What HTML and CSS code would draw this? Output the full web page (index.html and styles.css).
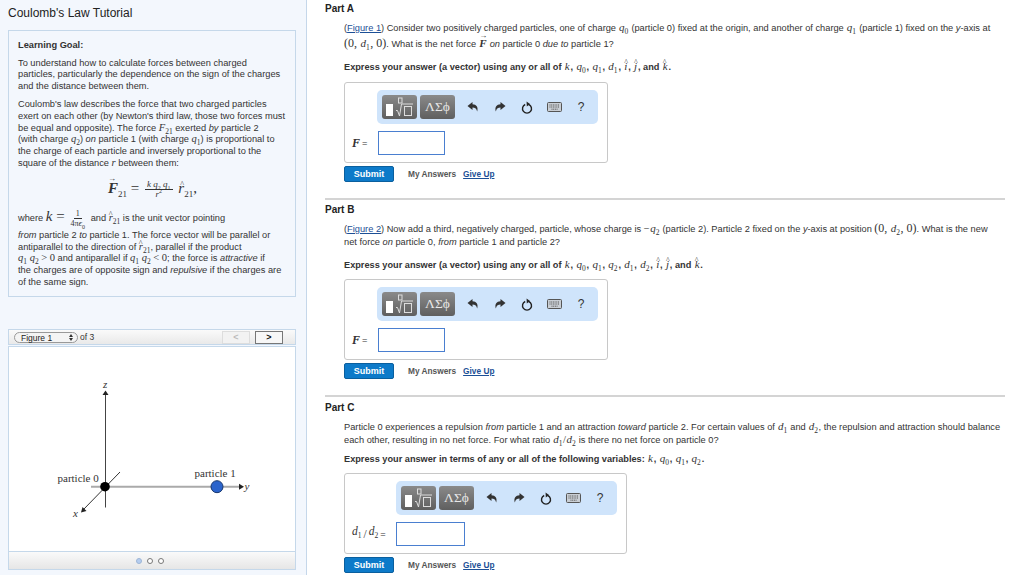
FILE: index.html
```html
<!DOCTYPE html>
<html lang="en">

<head>
    <meta charset="UTF-8">
    <title>Coulomb's Law Tutorial</title>
    <link rel="stylesheet" href="styles.css">
</head>

<body>
    <svg class="defs" width="0" height="0">
        <symbol id="ico-undo" viewBox="0 0 12 12">
            <path d="M5.500 1 .5 5l5 4V6.400c2.300 0 3.900.9 4.700 4 1.300-4.300-.9-7-4.700-7.200z" fill="#333" />
        </symbol>
        <symbol id="ico-redo" viewBox="0 0 12 12">
            <path d="M6.500 1l5 4-5 4V6.400c-2.300 0-3.900.9-4.700 4-1.300-4.300.9-7 4.700-7.200z" fill="#333" />
        </symbol>
        <symbol id="ico-reload" viewBox="0 0 12 12">
            <path d="M7.800 3a4.500 4.500 0 1 1-3.600 0" fill="none" stroke="#222" stroke-width="1.400" />
            <path d="M5.600 0 9 2.600 5.800 5z" fill="#222" />
        </symbol>
        <symbol id="ico-keys" viewBox="0 0 15 10">
            <rect x=".5" y=".5" width="14" height="9" rx="1" fill="#c9ced4" stroke="#555" />
            <path d="M2.500 3h10M2.500 5h10M4.500 7.200h6" stroke="#555" stroke-dasharray="1 .7" />
        </symbol>
        <symbol id="ico-root" viewBox="0 0 30 20">
            <rect x="1" y="7" width="7" height="12" fill="#fff" />
            <path d="M11 13.500h1.500l2 5.500 2-12h11.500" fill="none" stroke="#ddd" />
            <rect x="13.500" y="1" width="3.500" height="5" fill="none" stroke="#ddd" />
            <rect x="19.500" y="9.500" width="7" height="9" fill="none" stroke="#ddd" />
        </symbol>
    </svg>

    <div class="page">
        <div class="side">
            <div class="side-title">Coulomb's Law Tutorial</div>

            <div class="goal">
                <div class="goal-head">Learning Goal:</div>
                <p>To understand how to calculate forces between charged<br>particles, particularly the dependence on the sign of the charges<br>and the distance between them.</p>
                <p>Coulomb's law describes the force that two charged particles<br>exert on each other (by Newton's third law, those two forces must<br>be equal and opposite). The force <i class="v">F<sub>21</sub></i> exerted <em>by</em> particle 2<br>(with charge <i class="v">q<sub>2</sub></i>) <em>on</em> particle 1 (with charge <i class="v">q<sub>1</sub></i>) is proportional to<br>the charge of each particle and inversely proportional to the<br>square of the distance <i class="v">r</i> between them:</p>
                <div class="formula">
                    <i class="v vec">F</i><sub>21</sub> = <span class="frac"><span><i class="v">k q<sub>2</sub> q<sub>1</sub></i></span><span><i class="v">r</i><sup>2</sup></span></span> <i class="v hat">r</i><sub>21</sub>,
                </div>
                <div class="where">where <span class="big"><i class="v">k</i> = </span><span class="frac"><span>1</span><span>4π<i class="v">ϵ<sub>0</sub></i></span></span> and <i class="v hat">r</i><sub class="v-sub">21</sub> is the unit vector pointing</div>
                <p class="after"><em>from</em> particle 2 <em>to</em> particle 1. The force vector will be parallel or<br>antiparallel to the direction of <i class="v hat">r</i><sub class="v-sub">21</sub>, parallel if the product<br><i class="v">q<sub>1</sub> q<sub>2</sub></i> <span class="s">&gt; 0</span> and antiparallel if <i class="v">q<sub>1</sub> q<sub>2</sub></i> <span class="s">&lt; 0</span>; the force is <em>attractive</em> if<br>the charges are of opposite sign and <em>repulsive</em> if the charges are<br>of the same sign.</p>
            </div>

            <div class="fig-bar">
                <div class="fig-select">Figure 1<span class="updown"></span></div>
                <span class="fig-of">of 3</span>
                <div class="fig-btn fig-btn-off">&lt;</div>
                <div class="fig-btn">&gt;</div>
            </div>
            <div class="fig-panel">
                <svg class="diagram" viewBox="9 347 287 203" width="287" height="203">
                    <path d="M105.500 507.500V393" stroke="#444" />
                    <path d="M105.500 390.500l-3 4.500h6z" fill="#222" />
                    <path d="M120 472 83 510" stroke="#333" />
                    <path d="M81 512.500l1.500-5.500 4 4z" fill="#222" />
                    <path d="M91 486.700h148" stroke="#aaa" stroke-width="2" />
                    <path d="M244 486.700l-5-3v6z" fill="#222" />
                    <circle cx="105" cy="486.700" r="4.800" fill="#000" />
                    <circle cx="217" cy="486.700" r="6" fill="#2b64cc" stroke="#17376f" />
                    <text class="d-label" x="57.500" y="481.500">particle 0</text>
                    <text class="d-label" x="194.500" y="476.500">particle 1</text>
                    <text class="d-axis" x="103" y="388">z</text>
                    <text class="d-axis" x="73" y="517">x</text>
                    <text class="d-axis" x="244.500" y="490">y</text>
                </svg>
            </div>
            <div class="fig-dots">
                <span class="dot dot-on"></span><span class="dot"></span><span class="dot"></span>
            </div>
        </div>

        <div class="main">
            <section class="part part-a">
                <h2>Part A</h2>
                <p class="q">(<a href="#">Figure 1</a>) Consider two positively charged particles, one of charge <i class="v">q<sub>0</sub></i> (particle 0) fixed at the origin, and another of charge <i class="v">q<sub>1</sub></i> (particle 1) fixed on the <em>y</em>-axis at<br><span class="s big">(0, <i class="v">d<sub>1</sub></i>, 0)</span>. What is the net force <i class="v vec big">F</i> <em>on</em> particle 0 <em>due to</em> particle 1?</p>
                <p class="express">Express your answer (a vector) using any or all of <i class="v">k</i>, <i class="v">q<sub>0</sub></i>, <i class="v">q<sub>1</sub></i>, <i class="v">d<sub>1</sub></i>, <i class="v hat">i</i>, <i class="v hat">j</i>, and <i class="v hat">k</i>.</p>
                <div class="answer">
                    <div class="tools">
                        <div class="tool-btn"><svg width="30" height="20"><use href="#ico-root" /></svg></div>
                        <div class="tool-btn tool-greek">ΛΣϕ</div>
                        <svg class="ico" width="12" height="12"><use href="#ico-undo" /></svg>
                        <svg class="ico" width="12" height="12"><use href="#ico-redo" /></svg>
                        <svg class="ico" width="12" height="13"><use href="#ico-reload" /></svg>
                        <svg class="ico ico-wide" width="15" height="10"><use href="#ico-keys" /></svg>
                        <span class="ico ico-q">?</span>
                    </div>
                    <div class="ans-label"><i class="v vec big">F</i> =</div>
                    <div class="ans-input"></div>
                </div>
                <div class="actions">
                    <div class="submit">Submit</div>
                    <span class="my">My Answers</span>
                    <a class="give" href="#">Give Up</a>
                </div>
            </section>

            <section class="part part-b">
                <h2>Part B</h2>
                <p class="q">(<a href="#">Figure 2</a>) Now add a third, negatively charged, particle, whose charge is <span class="s">−</span><i class="v">q<sub>2</sub></i> (particle 2). Particle 2 fixed on the <em>y</em>-axis at position <span class="s big">(0, <i class="v">d<sub>2</sub></i>, 0)</span>. What is the new<br>net force <em>on</em> particle 0, <em>from</em> particle 1 and particle 2?</p>
                <p class="express">Express your answer (a vector) using any or all of <i class="v">k</i>, <i class="v">q<sub>0</sub></i>, <i class="v">q<sub>1</sub></i>, <i class="v">q<sub>2</sub></i>, <i class="v">d<sub>1</sub></i>, <i class="v">d<sub>2</sub></i>, <i class="v hat">i</i>, <i class="v hat">j</i>, and <i class="v hat">k</i>.</p>
                <div class="answer">
                    <div class="tools">
                        <div class="tool-btn"><svg width="30" height="20"><use href="#ico-root" /></svg></div>
                        <div class="tool-btn tool-greek">ΛΣϕ</div>
                        <svg class="ico" width="12" height="12"><use href="#ico-undo" /></svg>
                        <svg class="ico" width="12" height="12"><use href="#ico-redo" /></svg>
                        <svg class="ico" width="12" height="13"><use href="#ico-reload" /></svg>
                        <svg class="ico ico-wide" width="15" height="10"><use href="#ico-keys" /></svg>
                        <span class="ico ico-q">?</span>
                    </div>
                    <div class="ans-label"><i class="v vec big">F</i> =</div>
                    <div class="ans-input"></div>
                </div>
                <div class="actions">
                    <div class="submit">Submit</div>
                    <span class="my">My Answers</span>
                    <a class="give" href="#">Give Up</a>
                </div>
            </section>

            <section class="part part-c">
                <h2>Part C</h2>
                <p class="q">Particle 0 experiences a repulsion <em>from</em> particle 1 and an attraction <em>toward</em> particle 2. For certain values of <i class="v">d<sub>1</sub></i> and <i class="v">d<sub>2</sub></i>, the repulsion and attraction should balance<br>each other, resulting in no net force. For what ratio <i class="v">d<sub>1</sub></i><span class="s">/</span><i class="v">d<sub>2</sub></i> is there no net force on particle 0?</p>
                <p class="express">Express your answer in terms of any or all of the following variables: <i class="v">k</i>, <i class="v">q<sub>0</sub></i>, <i class="v">q<sub>1</sub></i>, <i class="v">q<sub>2</sub></i>.</p>
                <div class="answer answer-wide">
                    <div class="tools">
                        <div class="tool-btn"><svg width="30" height="20"><use href="#ico-root" /></svg></div>
                        <div class="tool-btn tool-greek">ΛΣϕ</div>
                        <svg class="ico" width="12" height="12"><use href="#ico-undo" /></svg>
                        <svg class="ico" width="12" height="12"><use href="#ico-redo" /></svg>
                        <svg class="ico" width="12" height="13"><use href="#ico-reload" /></svg>
                        <svg class="ico ico-wide" width="15" height="10"><use href="#ico-keys" /></svg>
                        <span class="ico ico-q">?</span>
                    </div>
                    <div class="ans-label"><i class="v">d<sub>1</sub></i><span class="s">/</span><i class="v">d<sub>2</sub></i> =</div>
                    <div class="ans-input"></div>
                </div>
                <div class="actions">
                    <div class="submit">Submit</div>
                    <span class="my">My Answers</span>
                    <a class="give" href="#">Give Up</a>
                </div>
            </section>
        </div>
    </div>
</body>

</html>
```

FILE: styles.css
```css
* {
    box-sizing: border-box;
}

body {
    margin: 0;
    font-family: "Liberation Sans", Arial, sans-serif;
    font-size: 9.250px;
    color: #333;
    background: #fff;
    overflow: hidden;
}

.defs {
    display: block;
    height: 0;
}

.page {
    display: flex;
    width: 1024px;
    height: 575px;
    overflow: hidden;
}

/* left column */
.side {
    width: 307px;
    height: 575px;
    padding: 0 10px 0 8px;
    background: #f3f7fd;
    border-right: 1px solid #c5d7ea;
}

.side-title {
    padding-top: 6px;
    height: 30px;
    font-size: 12px;
    color: #222;
}

.goal {
    height: 267px;
    padding: 9px 8px 0 9px;
    border: 1px solid #c5d8ea;
    line-height: 11.700px;
    white-space: nowrap;
}

.goal p {
    margin: 0 0 6.500px;
}

.goal-head {
    font-weight: bold;
    margin-bottom: 6px;
}

.formula {
    font-family: "Liberation Serif", serif;
    font-size: 15px;
    height: 24px;
    line-height: 24px;
    margin-bottom: 8px;
    text-align: center;
    white-space: nowrap;
}

.formula sub {
    font-size: 9px;
}

.formula .frac {
    font-size: 9px;
    margin: 0 2px;
}

.where {
    height: 20px;
    line-height: 20px;
    white-space: nowrap;
}

.where .frac {
    margin: 0 3px 0 2px;
}

.goal .after {
    margin: 0;
    padding-top: 2px;
}

.fig-bar {
    margin-top: 32px;
    height: 16px;
    display: flex;
    align-items: center;
    padding: 0 12px 0 5px;
    background: linear-gradient(#fafafa, #e9e9e9);
    border: 1px solid #c5d8ea;
}

.fig-select {
    position: relative;
    width: 64px;
    height: 11px;
    line-height: 10px;
    padding-left: 6px;
    font-size: 8.500px;
    color: #222;
    background: #f4f4f4;
    border: 1px solid #999;
    border-radius: 6px;
}

.updown {
    position: absolute;
    right: 3px;
    top: 1px;
    width: 5px;
    height: 7px;
}

.updown::before,
.updown::after {
    content: "";
    position: absolute;
    left: 0;
    border-left: 2.500px solid transparent;
    border-right: 2.500px solid transparent;
}

.updown::before {
    top: 0;
    border-bottom: 3px solid #333;
}

.updown::after {
    bottom: 0;
    border-top: 3px solid #333;
}

.fig-of {
    margin-left: 2px;
    font-size: 8.500px;
    flex: 1;
}

.fig-btn {
    width: 28px;
    height: 13px;
    margin-left: 5px;
    line-height: 11px;
    text-align: center;
    font-weight: bold;
    font-size: 9px;
    color: #111;
    background: #f7f7f7;
    border: 1px solid #777;
}

.fig-btn-off {
    color: #bbb;
    border-color: #ddd;
    background: #f2f2f2;
}

.fig-panel {
    margin-top: 1px;
    height: 205px;
    background: #fff;
    border: 1px solid #c5d8ea;
    border-bottom: 0;
}

.diagram {
    display: block;
}

.d-label {
    font-family: "Liberation Serif", serif;
    font-size: 11px;
    fill: #333;
}

.d-axis {
    font-family: "Liberation Serif", serif;
    font-style: italic;
    font-size: 11px;
    fill: #333;
}

.fig-dots {
    height: 19px;
    display: flex;
    align-items: center;
    justify-content: center;
    gap: 5px;
    padding-right: 4px;
    background: linear-gradient(#fafafa, #e6e6e6);
    border: 1px solid #c5d8ea;
}

.dot {
    width: 6px;
    height: 6px;
    border-radius: 50%;
    border: 1px solid #777;
    background: #fff;
}

.dot-on {
    background: #b5cdf0;
    border-color: #9db5d5;
}

/* math bits */
.v {
    font-family: "Liberation Serif", serif;
    font-style: italic;
    font-size: 10.500px;
    line-height: 0;
}

.v sub,
sub.v-sub,
.formula sub {
    font-style: normal;
    font-family: "Liberation Serif", serif;
}

sub {
    font-size: 7.500px;
    line-height: 0;
}

sup {
    font-size: 6px;
    line-height: 0;
}

.s {
    font-family: "Liberation Serif", serif;
    font-size: 10.500px;
    line-height: 0;
    white-space: nowrap;
}

.big {
    font-family: "Liberation Serif", serif;
    font-size: 12px;
    line-height: 0;
    white-space: nowrap;
}

.where .big,
.where .big .v,
.formula .v {
    font-size: 15px;
}

.frac {
    display: inline-flex;
    flex-direction: column;
    align-items: center;
    vertical-align: middle;
    font-family: "Liberation Serif", serif;
    font-size: 8px;
    line-height: 9px;
}

.frac .v,
.formula .frac .v {
    font-size: 9px;
    line-height: 9px;
}

.frac sub,
.formula .frac sub {
    font-size: 6px;
}

.frac span:first-child {
    padding: 0 2px;
    border-bottom: 1px solid #333;
}

.vec,
.hat {
    position: relative;
}

.vec {
    font-weight: bold;
}

.vec::before {
    content: "→";
    position: absolute;
    left: 0;
    top: -5px;
    font-size: 8px;
    line-height: 1;
    font-style: normal;
    font-weight: normal;
}

.hat::before {
    content: "^";
    position: absolute;
    left: 0;
    top: -1px;
    font-size: 8px;
    line-height: 1;
    font-style: normal;
    font-weight: normal;
}

.formula .hat::before {
    left: 2px;
    top: 1px;
}

/* right column */
.main {
    flex: 1;
    padding-left: 18px;
    width: 717px;
}

.part {
    width: 680px;
    border-bottom: 2px solid #d4d4d4;
}

.part h2 {
    margin: 0;
    font-size: 10px;
    line-height: 12px;
    color: #222;
}

.part-a {
    padding-top: 3px;
    height: 200px;
}

.part-b {
    padding-top: 4px;
    height: 197px;
}

.part-c {
    padding-top: 5px;
    border-bottom: 0;
}

.q {
    margin: 7px 0 0 19px;
    width: 660px;
    line-height: 12.500px;
    white-space: nowrap;
}

.q .v {
    font-size: 11px;
    margin: 0 .5px;
}

.express {
    margin: 11px 0 0 19px;
    font-weight: bold;
    font-size: 9.200px;
    line-height: 12px;
    white-space: nowrap;
}

.express .v {
    font-weight: normal;
    font-size: 11px;
    margin: 0 .8px;
}

.part-a .q {
    margin-top: 5px;
    line-height: 16px;
}

.part-a .express {
    margin-top: 9px;
}

.part-c .express {
    margin-top: 7px;
}

.answer {
    width: 264px;
    height: 81px;
    margin: 8px 0 0 19px;
    padding: 7px 9px 0 8px;
    display: grid;
    grid-template-columns: 24px 221px;
    grid-template-rows: 34px 24px;
    row-gap: 7px;
    border: 1px solid #c8c8c8;
    border-radius: 3px;
}

.part-a .answer {
    margin-top: 9px;
}

.answer-wide {
    width: 283px;
    grid-template-columns: 43px 221px;
}

.tools {
    grid-column: 2;
    grid-row: 1;
    display: flex;
    align-items: center;
    padding-left: 5px;
    background: #cfe4fb;
    border-radius: 5px;
}

.tool-btn {
    width: 35px;
    height: 24px;
    margin-right: 3px;
    display: flex;
    align-items: center;
    justify-content: center;
    color: #e8e8e8;
    font-family: "Liberation Serif", serif;
    font-size: 13.500px;
    background: linear-gradient(#8a8a8a, #5f5f5f);
    border-radius: 3px;
}

.ico {
    flex: none;
    margin-left: 12px;
    margin-right: 3px;
    width: 12px;
}

.tool-greek + .ico {
    margin-left: 9px;
}

.ico-wide {
    width: 15px;
    margin-left: 10.500px;
}

.ico-wide + .ico {
    margin-left: 10.500px;
}

.ico-q {
    font-size: 12px;
    color: #333;
    text-align: center;
}

.ans-label {
    grid-column: 1;
    grid-row: 2;
    display: flex;
    align-items: center;
    gap: 2px;
    white-space: nowrap;
    margin-left: -1px;
}

.answer-wide .ans-label .v,
.answer-wide .ans-label .s {
    font-size: 11.500px;
}

.ans-input {
    grid-column: 2;
    grid-row: 2;
    width: 67px;
    margin-left: 1px;
    background: #fff;
    border: 1px solid #4a7fd0;
}

.answer-wide .ans-input {
    width: 69px;
    margin-left: 0;
}

.actions {
    display: flex;
    align-items: center;
    height: 16px;
    margin: 3px 0 0 19px;
    font-size: 8.300px;
    font-weight: bold;
}

.submit {
    width: 50px;
    height: 16px;
    line-height: 15px;
    text-align: center;
    font-size: 9px;
    color: #fff;
    background: #0d7ac9;
    border: 1px solid #0a5f9e;
    border-radius: 2px;
}

.my {
    margin-left: 14px;
    color: #555;
}

a {
    color: #1c4f96;
    text-decoration: underline;
}

.give {
    margin-left: 7px;
}
```
